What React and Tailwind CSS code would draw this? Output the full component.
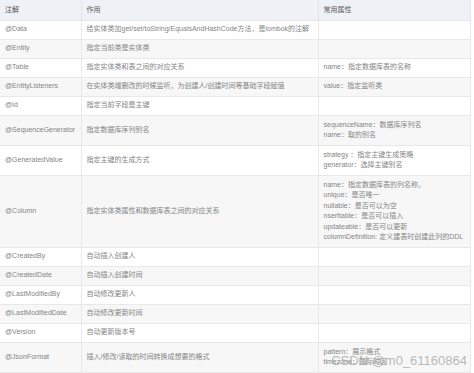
import React from "react";

const rows = [
  { name: "@Data", use: "给实体类加get/set/toString/EqualsAndHashCode方法，是lombok的注解", attrs: [], h: "h-[19px]" },
  { name: "@Entity", use: "指定当前类是实体类", attrs: [], h: "h-[19px]" },
  { name: "@Table", use: "指定实体类和表之间的对应关系", attrs: ["name：指定数据库表的名称"], h: "h-[19px]" },
  { name: "@EntityListeners", use: "在实体类增删改的时候监听，为创建人/创建时间等基础字段赋值", attrs: ["value：指定监听类"], h: "h-[19px]" },
  { name: "@Id", use: "指定当前字段是主键", attrs: [], h: "h-[19px]" },
  { name: "@SequenceGenerator", use: "指定数据库序列别名", attrs: ["sequenceName：数据库序列名", "name：取的别名"], h: "h-[30px]" },
  { name: "@GeneratedValue", use: "指定主键的生成方式", attrs: ["strategy ：指定主键生成策略", "generator：选择主键别名"], h: "h-[30px]" },
  {
    name: "@Column",
    use: "指定实体类属性和数据库表之间的对应关系",
    attrs: [
      "name：指定数据库表的列名称。",
      "unique：是否唯一",
      "nullable：是否可以为空",
      "nserttable：是否可以插入",
      "updateable：是否可以更新",
      "columnDefinition: 定义建表时创建此列的DDL",
    ],
    h: "h-[72px]",
  },
  { name: "@CreatedBy", use: "自动插入创建人", attrs: [], h: "h-[19px]" },
  { name: "@CreatedDate", use: "自动插入创建时间", attrs: [], h: "h-[19px]" },
  { name: "@LastModifiedBy", use: "自动修改更新人", attrs: [], h: "h-[19px]" },
  { name: "@LastModifiedDate", use: "自动修改更新时间", attrs: [], h: "h-[19px]" },
  { name: "@Version", use: "自动更新版本号", attrs: [], h: "h-[19px]" },
  { name: "@JsonFormat", use: "插入/修改/读取的时间转换成想要的格式", attrs: ["pattern：展示格式", "timezone：国际时区"], h: "h-[30px]" },
];

export default function App() {
  return (
    <div className="relative w-[474px] h-[373px] overflow-hidden bg-white font-['Liberation_Sans','Noto_Sans_CJK_SC',sans-serif] text-[7px] leading-[10.5px] text-[#858585]">
      <table className="w-[470px] border-collapse table-fixed">
        <colgroup>
          <col className="w-[81px]" />
          <col className="w-[237px]" />
          <col className="w-[152px]" />
        </colgroup>
        <thead>
          <tr className="h-[20px] bg-[#eef1f5] text-[#5a5a5a]">
            <th className="border-b border-r border-[#e3e6ea] px-[5px] text-left font-normal">注解</th>
            <th className="border-b border-r border-[#e3e6ea] px-[5px] text-left font-normal">作用</th>
            <th className="border-b border-r border-[#e3e6ea] px-[5px] text-left font-normal">常用属性</th>
          </tr>
        </thead>
        <tbody>
          {rows.map((r, i) => (
            <tr key={r.name} className={`${r.h} ${i % 2 === 1 ? "bg-[#f7f7f7]" : "bg-white"}`}>
              <td className="border-b border-r border-[#e8e8e8] px-[5px] align-middle">{r.name}</td>
              <td className="border-b border-r border-[#e8e8e8] px-[5px] align-middle">{r.use}</td>
              <td className="border-b border-r border-[#e8e8e8] px-[5px] align-middle">
                {r.attrs.map((a) => (
                  <div key={a}>{a}</div>
                ))}
              </td>
            </tr>
          ))}
        </tbody>
      </table>
      <div className="absolute right-[7px] top-[353px] text-[13px] leading-[16px] text-[#a8a8a8]/80 font-['Liberation_Sans',sans-serif] whitespace-nowrap">
        CSDN @m0_61160864
      </div>
    </div>
  );
}
